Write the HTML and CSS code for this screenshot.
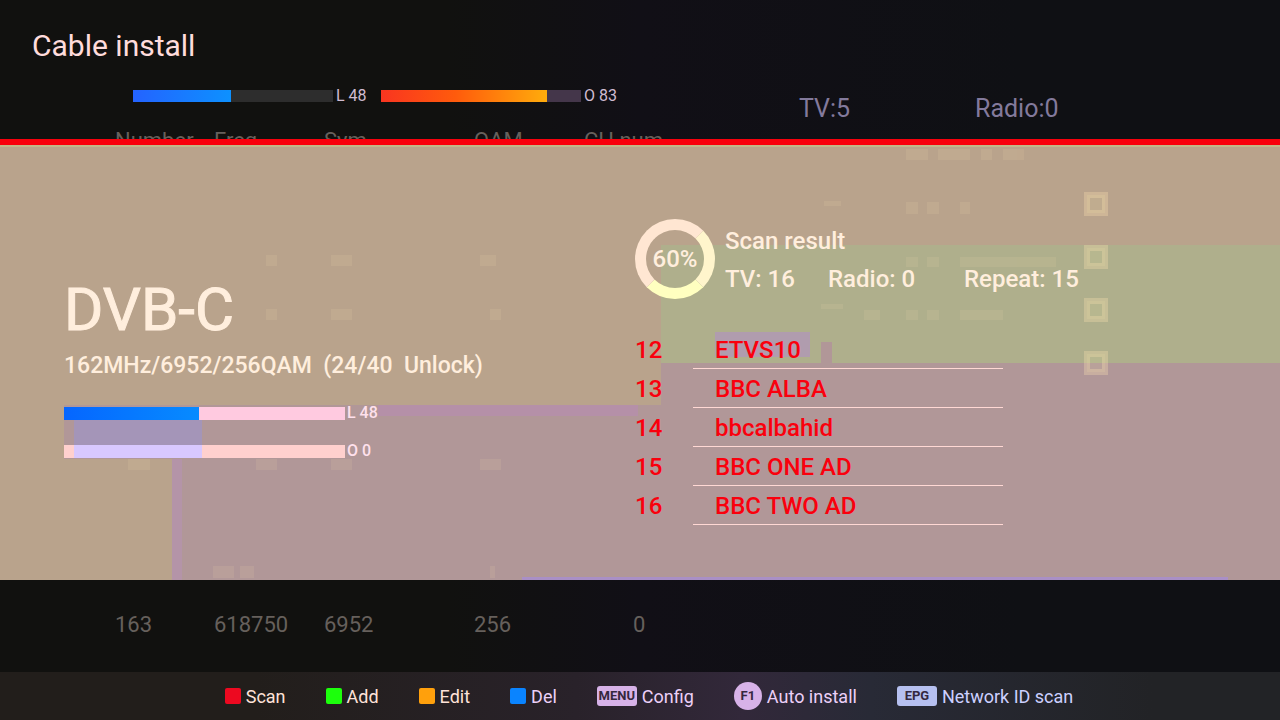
FILE: index.html
```html
<!DOCTYPE html>
<html lang="en">
<head>
    <meta charset="UTF-8">
    <meta name="viewport" content="width=device-width, initial-scale=1.0">
    <title>Cable install</title>
    <link rel="stylesheet" href="styles.css">
</head>
<body>

    <header class="top">
        <h1>Cable install</h1>
        <div class="status">
            <div class="signal">
                <div class="bar dark"><div class="fill blue" style="width: 49%"></div></div>
                <span>L 48</span>
            </div>
            <div class="signal">
                <div class="bar violet"><div class="fill orange" style="width: 83%"></div></div>
                <span>O 83</span>
            </div>
            <div class="totals">
                <span>TV:5</span>
                <span>Radio:0</span>
            </div>
        </div>
        <div class="columns heads">
            <span>Number</span>
            <span>Freq.</span>
            <span>Sym.</span>
            <span>QAM</span>
            <span>CH num</span>
        </div>
    </header>

    <main class="panel">
        <!-- transponder list showing faintly through the panel -->
        <svg class="backdrop" viewBox="0 0 1280 435" preserveAspectRatio="none" aria-hidden="true">
            <rect width="1280" height="435" fill="#b9a38c"/>
            <rect width="1280" height="2" fill="#c3b889"/>
            <rect x="661" y="100" width="619" height="118" fill="#afaf8c"/>
            <rect x="661" y="218" width="619" height="217" fill="#b19798"/>
            <rect x="64" y="260" width="597" height="54" fill="#b19798"/>
            <rect x="172" y="314" width="489" height="121" fill="#b19798"/>
            <rect x="378" y="260" width="260" height="11" fill="#b590a8"/>
            <rect x="74" y="274" width="128" height="27" fill="#a495b8"/>
            <rect x="172" y="314" width="10" height="121" fill="#b494a8"/>
            <rect x="715" y="187" width="95" height="25" fill="#b09cae"/>
            <rect x="821" y="197" width="11" height="21" fill="#b19798"/>
            <rect x="522" y="432" width="706" height="3" fill="#a98fc6"/>
            <g fill="#ffe6b4" opacity=".1">
                <rect x="906" y="4" width="22" height="11"/>
                <rect x="938" y="4" width="32" height="11"/>
                <rect x="981" y="4" width="11" height="11"/>
                <rect x="1003" y="4" width="21" height="11"/>
                <rect x="824" y="56" width="17" height="5"/>
                <rect x="906" y="57" width="12" height="12"/>
                <rect x="927" y="57" width="12" height="12"/>
                <rect x="960" y="57" width="10" height="12"/>
                <rect x="906" y="112" width="12" height="10"/>
                <rect x="927" y="112" width="12" height="10"/>
                <rect x="960" y="112" width="96" height="10"/>
                <rect x="821" y="159" width="22" height="5"/>
                <rect x="864" y="165" width="16" height="10"/>
                <rect x="906" y="165" width="12" height="10"/>
                <rect x="927" y="165" width="12" height="10"/>
                <rect x="960" y="165" width="43" height="10"/>
                <rect x="266" y="110" width="11" height="11"/>
                <rect x="331" y="110" width="21" height="11"/>
                <rect x="480" y="110" width="16" height="11"/>
                <rect x="266" y="164" width="11" height="11"/>
                <rect x="331" y="164" width="21" height="11"/>
                <rect x="490" y="164" width="11" height="11"/>
                <rect x="128" y="314" width="22" height="11"/>
                <rect x="256" y="314" width="21" height="11"/>
                <rect x="331" y="314" width="21" height="11"/>
                <rect x="480" y="314" width="21" height="11"/>
                <rect x="213" y="421" width="21" height="12"/>
                <rect x="240" y="421" width="14" height="12"/>
                <rect x="490" y="421" width="5" height="12"/>
            </g>
            <g fill="#ffffb4" fill-opacity=".1" stroke="#ffe6b4" stroke-opacity=".3" stroke-width="6">
                <path d="M1087 50h18v18h-18z"/>
                <path d="M1087 103h18v18h-18z"/>
                <path d="M1087 156h18v18h-18z"/>
                <path d="M1087 209h18v18h-18z"/>
            </g>
        </svg>

        <section class="tuner">
            <h2>DVB-C</h2>
            <p>162MHz/6952/256QAM &nbsp;(24/40 &nbsp;Unlock)</p>
            <div class="signal">
                <div class="bar pink"><div class="fill blue" style="width: 48%"></div></div>
                <span>L 48</span>
            </div>
            <div class="signal">
                <div class="bar quality"></div>
                <span>O 0</span>
            </div>
        </section>

        <section class="result">
            <div class="summary">
                <div class="ring">60%</div>
                <div class="counts">
                    <h3>Scan result</h3>
                    <div class="found">
                        <span>TV: 16</span>
                        <span>Radio: 0</span>
                        <span>Repeat: 15</span>
                    </div>
                </div>
            </div>
            <table class="channels">
                <tr><th scope="row">12</th><td>ETVS10</td></tr>
                <tr><th scope="row">13</th><td>BBC ALBA</td></tr>
                <tr><th scope="row">14</th><td>bbcalbahid</td></tr>
                <tr><th scope="row">15</th><td>BBC ONE AD</td></tr>
                <tr><th scope="row">16</th><td>BBC TWO AD</td></tr>
            </table>
        </section>
    </main>

    <div class="columns last-row">
        <span>163</span>
        <span>618750</span>
        <span>6952</span>
        <span>256</span>
        <span class="channel-count">0</span>
    </div>

    <footer class="keys">
        <button><i class="square red"></i>Scan</button>
        <button><i class="square green"></i>Add</button>
        <button><i class="square yellow"></i>Edit</button>
        <button class="cool"><i class="square azure"></i>Del</button>
        <button class="cool"><kbd>MENU</kbd>Config</button>
        <button class="cool"><kbd class="round">F1</kbd>Auto install</button>
        <button class="cold"><kbd class="epg">EPG</kbd>Network ID scan</button>
    </footer>

</body>
</html>
```
FILE: styles.css
```css
* {
    box-sizing: border-box;
}

body {
    margin: 0;
    min-height: 100vh;
    display: flex;
    flex-direction: column;
    font-family: Roboto, "Liberation Sans", sans-serif;
    background: linear-gradient(90deg, #11110f 35%, #110f16 50%, #0f1014 80%);
    color: #ffeedd;
}

h1, h2, h3, p {
    margin: 0;
    font-weight: 400;
}

/* title, signal bars and column heads, the panel lies over the lower half of the heads */
.top {
    height: 139px;
}

h1 {
    padding: 26px 32px 0;
    font-size: 30px;
    line-height: 40px;
    color: #ffdcdc;
}

.status {
    display: flex;
    align-items: center;
    height: 30px;
    margin-top: 27px;
    padding-left: 133px;
}

.signal {
    display: flex;
    align-items: center;
    gap: 2px;
    font-size: 16px;
    line-height: 20px;
    color: #d0bcd2;
}

.status .signal {
    width: 248px;
    margin-top: -24px;
    gap: 3px;
}

.bar {
    width: 200px;
    height: 12px;
}

.fill {
    height: 100%;
}

.dark { background: #2d2d2d; }
.violet { background: #44364a; }
.pink { background: #ffcae0; }
.blue { background: linear-gradient(90deg, #2463ff, #0d91ff); }
.orange { background: linear-gradient(90deg, #f93520, #ff5b0c 45%, #ffac0c); }
.quality { background: linear-gradient(90deg, #ffd0ce 10px, #d8c8ff 10px 138px, #ffd0ce 138px); }

.totals {
    display: grid;
    grid-template-columns: 176px 1fr;
    margin-left: 170px;
    font-size: 25px;
    color: #837a9c;
}

.columns {
    display: grid;
    grid-template-columns: 99px 110px 150px 110px 1fr;
    padding-left: 115px;
    font-size: 22px;
    line-height: 30px;
    color: #66605c;
}

.heads {
    margin-top: 3px;
}

/* scan in progress */
.panel {
    position: relative;
    flex: 1;
    display: grid;
    grid-template-columns: 571px 1fr;
    padding-left: 64px;
    border-top: 6px solid #f8000c;
    font-weight: 500;
}

.backdrop {
    position: absolute;
    inset: 0;
    width: 100%;
    height: 100%;
}

.tuner, .result {
    position: relative;
}

.tuner {
    padding-top: 130px;
}

h2 {
    font-size: 60px;
    line-height: 70px;
}

.tuner p {
    margin-bottom: 16px;
    font-size: 24px;
    line-height: 42px;
}

.tuner .signal {
    margin-bottom: 18px;
    color: #ffe0ec;
}

.tuner .bar {
    width: 281px;
    height: 13px;
}

.tuner .blue {
    background: linear-gradient(90deg, #0566ff, #078bff);
}

.tuner h2, .tuner p {
    -webkit-text-stroke: 1px #ffeedd;
}

.tuner p {
    -webkit-text-stroke-width: 0;
    font-weight: 500;
    font-size: 23px;
}

.result {
    padding-top: 74px;
}

.summary {
    display: flex;
    gap: 10px;
    font-size: 24px;
    line-height: 38px;
}

.ring {
    width: 80px;
    height: 80px;
    display: flex;
    align-items: center;
    justify-content: center;
    border: 11px solid #ffe6d2;
    border-right-color: #fff5cc;
    border-bottom-color: #ffffc0;
    border-radius: 50%;
}

h3 {
    font-size: 24px;
    font-weight: 500;
    margin-top: 3px;
}

.found {
    display: grid;
    grid-template-columns: 103px 136px 1fr;
}

.channels {
    width: 368px;
    margin-top: 31px;
    border-collapse: collapse;
    font-size: 24px;
    line-height: 36px;
    color: #fa000d;
}

.channels th, .channels td {
    padding: 2px 0 0;
    text-align: left;
    font-weight: 500;
}

.channels th {
    width: 58px;
}

.channels td {
    padding-left: 22px;
    border-bottom: 1px solid #ffd8d4;
}

/* list row left visible under the panel */
.last-row {
    height: 92px;
    padding-top: 30px;
}

.last-row .channel-count {
    padding-left: 49px;
}

.keys {
    display: flex;
    justify-content: center;
    gap: 40px;
    height: 48px;
    padding-left: 18px;
    background: linear-gradient(90deg, #221e1b 20%, #29222a 45%, #32283a 58%, #282a36 68%, #222326 90%);
}

.keys button {
    display: flex;
    align-items: center;
    gap: 5px;
    padding: 0;
    border: 0;
    background: none;
    font-family: inherit;
    font-size: 18px;
    color: #ffe2d8;
}

.keys .cool { color: #ecd0f8; }
.keys .cold { color: #ccd0ff; }

.square {
    width: 16px;
    height: 16px;
    border-radius: 2px;
}

.red { background: #ed0920; }
.green { background: #1cff0c; }
.yellow { background: #ffa00c; }
.azure { background: #0a84ff; }

kbd {
    width: 40px;
    height: 20px;
    border-radius: 3px;
    background: #d7b2e8;
    color: #35283e;
    font: bold 13px/20px Roboto, "Liberation Sans", sans-serif;
    text-align: center;
}

.round {
    width: 28px;
    height: 28px;
    line-height: 28px;
    border-radius: 50%;
}

.epg {
    background: #b6c0f0;
}
```
